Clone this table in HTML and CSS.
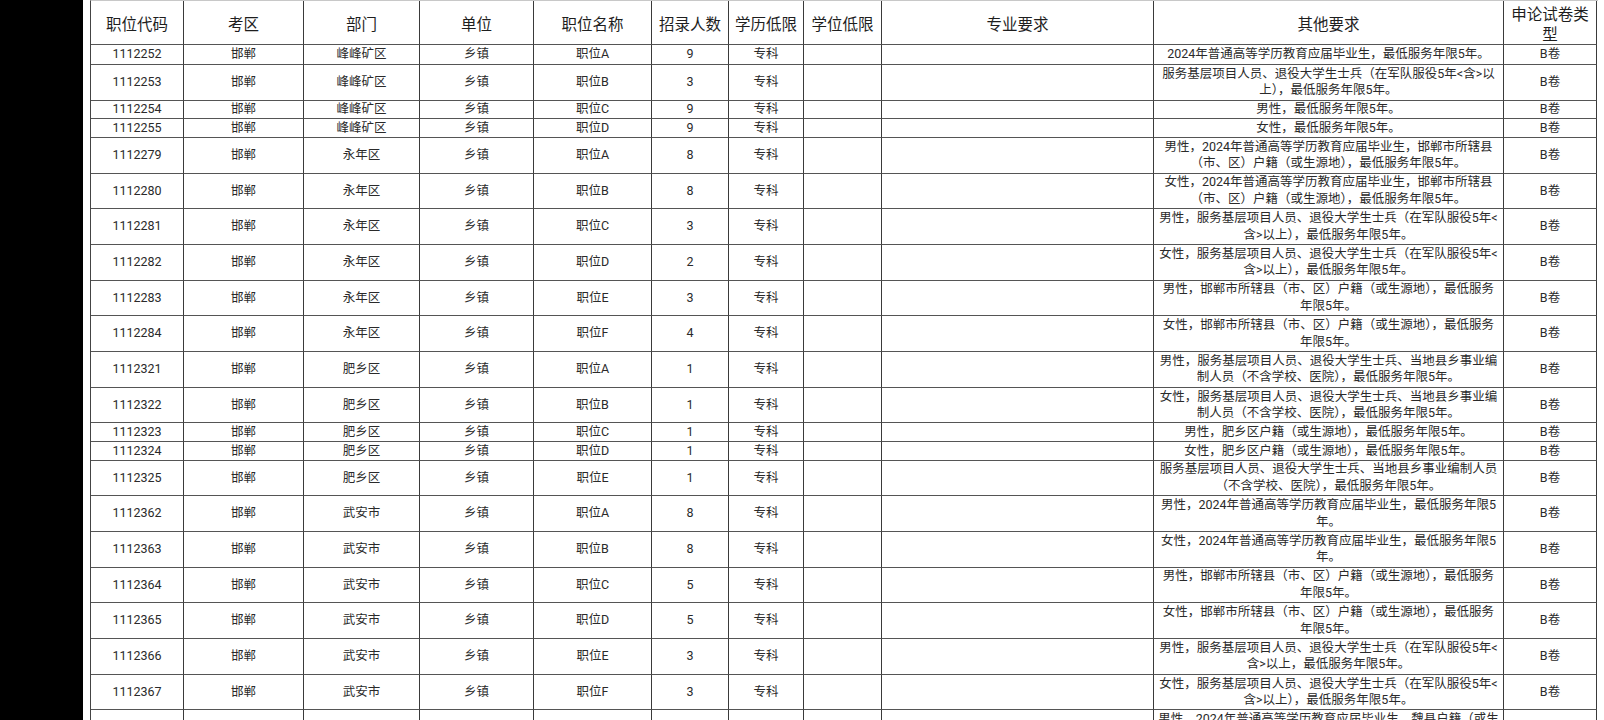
FILE: index.html
```html
<!DOCTYPE html>
<html lang="zh-CN">
<head>
<meta charset="utf-8">
<title>职位表</title>
<link rel="stylesheet" href="styles.css">
</head>
<body>
<div class="page">
  <div class="side"></div>
  <div class="sheet">
    <div class="grid">
      <div class="row head">
        <div class="c">职位代码</div><div class="c">考区</div><div class="c">部门</div><div class="c">单位</div><div class="c">职位名称</div><div class="c">招录人数</div><div class="c">学历低限</div><div class="c">学位低限</div><div class="c">专业要求</div><div class="c">其他要求</div><div class="c">申论试卷类<br>型</div>
      </div>
      <div class="row first">
        <div class="c">1112252</div><div class="c">邯郸</div><div class="c">峰峰矿区</div><div class="c">乡镇</div><div class="c">职位A</div><div class="c">9</div><div class="c">专科</div><div class="c"></div><div class="c"></div><div class="c">2024年普通高等学历教育应届毕业生，最低服务年限5年。</div><div class="c">B卷</div>
      </div>
      <div class="row tall">
        <div class="c">1112253</div><div class="c">邯郸</div><div class="c">峰峰矿区</div><div class="c">乡镇</div><div class="c">职位B</div><div class="c">3</div><div class="c">专科</div><div class="c"></div><div class="c"></div><div class="c">服务基层项目人员、退役大学生士兵（在军队服役5年&lt;含&gt;以<br>上），最低服务年限5年。</div><div class="c">B卷</div>
      </div>
      <div class="row short">
        <div class="c">1112254</div><div class="c">邯郸</div><div class="c">峰峰矿区</div><div class="c">乡镇</div><div class="c">职位C</div><div class="c">9</div><div class="c">专科</div><div class="c"></div><div class="c"></div><div class="c">男性，最低服务年限5年。</div><div class="c">B卷</div>
      </div>
      <div class="row short">
        <div class="c">1112255</div><div class="c">邯郸</div><div class="c">峰峰矿区</div><div class="c">乡镇</div><div class="c">职位D</div><div class="c">9</div><div class="c">专科</div><div class="c"></div><div class="c"></div><div class="c">女性，最低服务年限5年。</div><div class="c">B卷</div>
      </div>
      <div class="row tall">
        <div class="c">1112279</div><div class="c">邯郸</div><div class="c">永年区</div><div class="c">乡镇</div><div class="c">职位A</div><div class="c">8</div><div class="c">专科</div><div class="c"></div><div class="c"></div><div class="c">男性，2024年普通高等学历教育应届毕业生，邯郸市所辖县<br>（市、区）户籍（或生源地），最低服务年限5年。</div><div class="c">B卷</div>
      </div>
      <div class="row tall">
        <div class="c">1112280</div><div class="c">邯郸</div><div class="c">永年区</div><div class="c">乡镇</div><div class="c">职位B</div><div class="c">8</div><div class="c">专科</div><div class="c"></div><div class="c"></div><div class="c">女性，2024年普通高等学历教育应届毕业生，邯郸市所辖县<br>（市、区）户籍（或生源地），最低服务年限5年。</div><div class="c">B卷</div>
      </div>
      <div class="row tall">
        <div class="c">1112281</div><div class="c">邯郸</div><div class="c">永年区</div><div class="c">乡镇</div><div class="c">职位C</div><div class="c">3</div><div class="c">专科</div><div class="c"></div><div class="c"></div><div class="c">男性，服务基层项目人员、退役大学生士兵（在军队服役5年&lt;<br>含&gt;以上），最低服务年限5年。</div><div class="c">B卷</div>
      </div>
      <div class="row tall">
        <div class="c">1112282</div><div class="c">邯郸</div><div class="c">永年区</div><div class="c">乡镇</div><div class="c">职位D</div><div class="c">2</div><div class="c">专科</div><div class="c"></div><div class="c"></div><div class="c">女性，服务基层项目人员、退役大学生士兵（在军队服役5年&lt;<br>含&gt;以上），最低服务年限5年。</div><div class="c">B卷</div>
      </div>
      <div class="row tall">
        <div class="c">1112283</div><div class="c">邯郸</div><div class="c">永年区</div><div class="c">乡镇</div><div class="c">职位E</div><div class="c">3</div><div class="c">专科</div><div class="c"></div><div class="c"></div><div class="c">男性，邯郸市所辖县（市、区）户籍（或生源地），最低服务<br>年限5年。</div><div class="c">B卷</div>
      </div>
      <div class="row tall">
        <div class="c">1112284</div><div class="c">邯郸</div><div class="c">永年区</div><div class="c">乡镇</div><div class="c">职位F</div><div class="c">4</div><div class="c">专科</div><div class="c"></div><div class="c"></div><div class="c">女性，邯郸市所辖县（市、区）户籍（或生源地），最低服务<br>年限5年。</div><div class="c">B卷</div>
      </div>
      <div class="row tall">
        <div class="c">1112321</div><div class="c">邯郸</div><div class="c">肥乡区</div><div class="c">乡镇</div><div class="c">职位A</div><div class="c">1</div><div class="c">专科</div><div class="c"></div><div class="c"></div><div class="c">男性，服务基层项目人员、退役大学生士兵、当地县乡事业编<br>制人员（不含学校、医院），最低服务年限5年。</div><div class="c">B卷</div>
      </div>
      <div class="row tall">
        <div class="c">1112322</div><div class="c">邯郸</div><div class="c">肥乡区</div><div class="c">乡镇</div><div class="c">职位B</div><div class="c">1</div><div class="c">专科</div><div class="c"></div><div class="c"></div><div class="c">女性，服务基层项目人员、退役大学生士兵、当地县乡事业编<br>制人员（不含学校、医院），最低服务年限5年。</div><div class="c">B卷</div>
      </div>
      <div class="row short">
        <div class="c">1112323</div><div class="c">邯郸</div><div class="c">肥乡区</div><div class="c">乡镇</div><div class="c">职位C</div><div class="c">1</div><div class="c">专科</div><div class="c"></div><div class="c"></div><div class="c">男性，肥乡区户籍（或生源地），最低服务年限5年。</div><div class="c">B卷</div>
      </div>
      <div class="row short">
        <div class="c">1112324</div><div class="c">邯郸</div><div class="c">肥乡区</div><div class="c">乡镇</div><div class="c">职位D</div><div class="c">1</div><div class="c">专科</div><div class="c"></div><div class="c"></div><div class="c">女性，肥乡区户籍（或生源地），最低服务年限5年。</div><div class="c">B卷</div>
      </div>
      <div class="row tall">
        <div class="c">1112325</div><div class="c">邯郸</div><div class="c">肥乡区</div><div class="c">乡镇</div><div class="c">职位E</div><div class="c">1</div><div class="c">专科</div><div class="c"></div><div class="c"></div><div class="c">服务基层项目人员、退役大学生士兵、当地县乡事业编制人员<br>（不含学校、医院），最低服务年限5年。</div><div class="c">B卷</div>
      </div>
      <div class="row tall">
        <div class="c">1112362</div><div class="c">邯郸</div><div class="c">武安市</div><div class="c">乡镇</div><div class="c">职位A</div><div class="c">8</div><div class="c">专科</div><div class="c"></div><div class="c"></div><div class="c">男性，2024年普通高等学历教育应届毕业生，最低服务年限5<br>年。</div><div class="c">B卷</div>
      </div>
      <div class="row tall">
        <div class="c">1112363</div><div class="c">邯郸</div><div class="c">武安市</div><div class="c">乡镇</div><div class="c">职位B</div><div class="c">8</div><div class="c">专科</div><div class="c"></div><div class="c"></div><div class="c">女性，2024年普通高等学历教育应届毕业生，最低服务年限5<br>年。</div><div class="c">B卷</div>
      </div>
      <div class="row tall">
        <div class="c">1112364</div><div class="c">邯郸</div><div class="c">武安市</div><div class="c">乡镇</div><div class="c">职位C</div><div class="c">5</div><div class="c">专科</div><div class="c"></div><div class="c"></div><div class="c">男性，邯郸市所辖县（市、区）户籍（或生源地），最低服务<br>年限5年。</div><div class="c">B卷</div>
      </div>
      <div class="row tall">
        <div class="c">1112365</div><div class="c">邯郸</div><div class="c">武安市</div><div class="c">乡镇</div><div class="c">职位D</div><div class="c">5</div><div class="c">专科</div><div class="c"></div><div class="c"></div><div class="c">女性，邯郸市所辖县（市、区）户籍（或生源地），最低服务<br>年限5年。</div><div class="c">B卷</div>
      </div>
      <div class="row tall">
        <div class="c">1112366</div><div class="c">邯郸</div><div class="c">武安市</div><div class="c">乡镇</div><div class="c">职位E</div><div class="c">3</div><div class="c">专科</div><div class="c"></div><div class="c"></div><div class="c">男性，服务基层项目人员、退役大学生士兵（在军队服役5年&lt;<br>含&gt;以上，最低服务年限5年。</div><div class="c">B卷</div>
      </div>
      <div class="row tall">
        <div class="c">1112367</div><div class="c">邯郸</div><div class="c">武安市</div><div class="c">乡镇</div><div class="c">职位F</div><div class="c">3</div><div class="c">专科</div><div class="c"></div><div class="c"></div><div class="c">女性，服务基层项目人员、退役大学生士兵（在军队服役5年&lt;<br>含&gt;以上），最低服务年限5年。</div><div class="c">B卷</div>
      </div>
      <div class="row tall">
        <div class="c"></div><div class="c"></div><div class="c"></div><div class="c"></div><div class="c"></div><div class="c"></div><div class="c"></div><div class="c"></div><div class="c"></div><div class="c">男性，2024年普通高等学历教育应届毕业生，魏县户籍（或生<br>源地），最低服务年限5年。</div><div class="c"></div>
      </div>
    </div>
  </div>
</div>
</body>
</html>
```
FILE: styles.css
```css
html, body {
  margin: 0;
  padding: 0;
  background: #ffffff;
  height: 720px;
  overflow: hidden;
}

.page {
  display: flex;
  width: 1604px;
  height: 720px;
}

.side {
  width: 83px;
  flex: 0 0 83px;
  background: #000000;
}

.sheet {
  padding-left: 7px;
  flex: 1 1 auto;
}

.grid {
  display: grid;
  grid-template-columns: 93px 120px 116px 114px 118px 77px 75px 78px 272px 350px 93px;
  width: 1507px;
  border-left: 1px solid #444;
  border-top: 1px solid #c8c8c8;
  font-family: "Roboto", "Noto Sans CJK SC", sans-serif;
  font-size: 12.5px;
  color: #2a2a2a;
}

.row {
  display: contents;
}

.c {
  box-sizing: border-box;
  border-right: 1px solid #3a3a3a;
  border-bottom: 1px solid #555;
  display: flex;
  align-items: center;
  justify-content: center;
  text-align: center;
  white-space: nowrap;
  line-height: 16.5px;
  overflow: hidden;
}

.head .c {
  height: 44px;
  font-family: "Noto Sans CJK SC", sans-serif;
  font-size: 15.5px;
  line-height: 20px;
  color: #1e1e1e;
}

.first .c { height: 20px; }
.tall .c { height: 35.7px; }
.short .c { height: 18.6px; }
```
